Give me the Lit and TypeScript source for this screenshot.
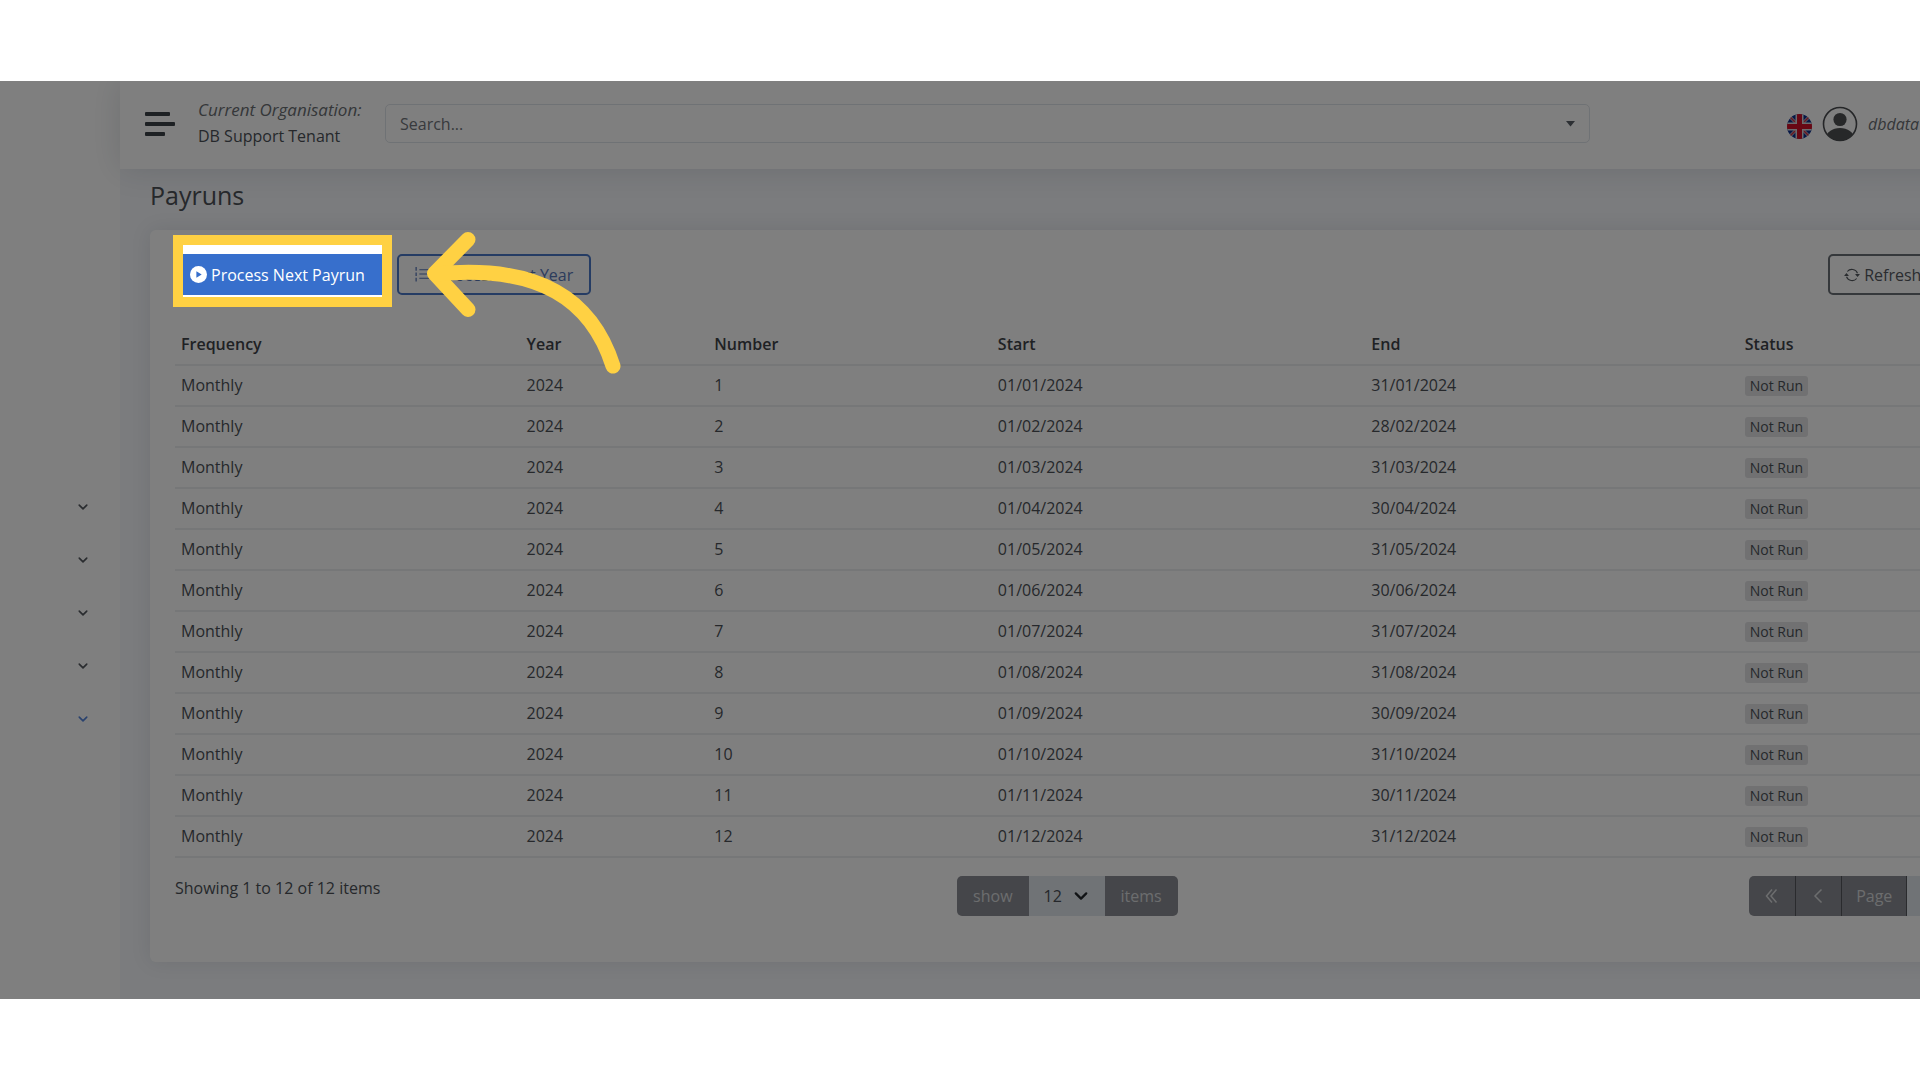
import { LitElement, html, css, svg } from "lit";
import { customElement } from "lit/decorators.js";

const PAYRUNS: Array<[string, string]> = [
  ["01/01/2024", "31/01/2024"],
  ["01/02/2024", "28/02/2024"],
  ["01/03/2024", "31/03/2024"],
  ["01/04/2024", "30/04/2024"],
  ["01/05/2024", "31/05/2024"],
  ["01/06/2024", "30/06/2024"],
  ["01/07/2024", "31/07/2024"],
  ["01/08/2024", "31/08/2024"],
  ["01/09/2024", "30/09/2024"],
  ["01/10/2024", "31/10/2024"],
  ["01/11/2024", "30/11/2024"],
  ["01/12/2024", "31/12/2024"],
];

const chevronDown = svg`<path d="M2 5l6 6 6-6" fill="none" stroke="currentColor" stroke-width="2.6" stroke-linecap="round" stroke-linejoin="round"/>`;

@customElement("app-root")
export class AppRoot extends LitElement {
  static styles = css`
    :host {
      display: block;
      padding: 81px 0;
      background: #fff;
      color: #4c5157;
      font: 16px/24px "Open Sans", "Noto Sans", sans-serif;
    }
    * {
      box-sizing: border-box;
    }
    button,
    input,
    select {
      font: inherit;
      color: inherit;
      margin: 0;
    }
    button {
      cursor: pointer;
    }
    svg {
      display: block;
      flex: none;
    }
    .frame {
      position: relative;
      overflow: hidden;
    }
    /* The application is wider than the window and is cut at its right edge. */
    .shell {
      display: grid;
      grid-template-columns: 120px 1fr;
      width: 116%;
      background: #f6f8fc;
    }
    .sidebar {
      display: flex;
      flex-direction: column;
      align-items: flex-end;
      gap: 37px;
      padding: 418px 29px 0 0;
      background: #fff;
    }
    .nav-toggle {
      display: block;
      padding: 3px;
      border: 0;
      background: none;
      color: #54595f;
    }
    .nav-toggle.active {
      color: #5585dc;
    }
    .main {
      min-width: 0;
    }
    .topbar {
      display: flex;
      align-items: center;
      height: 88px;
      padding: 0 25px 3px;
      background: #fff;
      box-shadow: 0 0 32px rgba(30, 40, 60, 0.14);
    }
    .menu {
      padding: 0;
      border: 0;
      background: none;
    }
    .org {
      width: 187px;
      margin: 0 0 2px 23px;
      line-height: 26px;
    }
    .org em {
      display: block;
      font-size: 17px;
      color: #6a6e73;
    }
    .search {
      display: flex;
      align-items: center;
      width: 1205px;
      height: 39px;
      padding: 0 14px;
      border: 1px solid #dfe4ea;
      border-radius: 5px;
    }
    .search input {
      flex: 1;
      min-width: 0;
      padding: 0;
      border: 0;
      outline: 0;
      background: none;
    }
    .search input::placeholder {
      color: #70757b;
      opacity: 1;
    }
    .user {
      display: flex;
      align-items: center;
      gap: 10px;
      margin-left: 197px;
      color: #6a6e73;
    }
    .flag {
      margin-top: 5px;
    }
    .content {
      padding: 11px 30px 37px;
    }
    h1 {
      margin: 0 0 20px;
      font-size: 25px;
      line-height: 30px;
      font-weight: 400;
    }
    .card {
      padding: 24px 25px 46px;
      border-radius: 6px;
      background: #fff;
      box-shadow: 0 0 20px rgba(30, 40, 60, 0.1);
    }
    .toolbar {
      display: grid;
      grid-template-columns: 1653fr 344fr;
      margin-bottom: 29px;
    }
    .actions {
      display: flex;
      gap: 6px;
    }
    .btn {
      display: flex;
      align-items: center;
      justify-self: start;
      gap: 4px;
      height: 41px;
      padding: 0 14px;
      border: 2px solid #6a7077;
      border-radius: 5px;
      background: none;
      color: #54595f;
      white-space: nowrap;
    }
    .btn.primary {
      padding: 0 24px 0 13px;
      border-color: #376fcc;
      background: #376fcc;
      color: #fff;
    }
    .btn.outline {
      gap: 8px;
      padding: 0 16px 0 15px;
      border-color: #4a78c8;
      color: #5878b8;
    }
    table {
      width: 100%;
      table-layout: fixed;
      border-collapse: collapse;
    }
    th,
    td {
      height: 41px;
      padding: 0 6px;
      border-bottom: 2px solid #eceef1;
      text-align: left;
      vertical-align: middle;
    }
    td {
      padding-bottom: 2px;
    }
    th {
      font-weight: 600;
      color: #3f4349;
    }
    .c-frequency {
      width: 17.3%;
    }
    .c-year {
      width: 9.4%;
    }
    .c-number {
      width: 14.2%;
    }
    .c-date {
      width: 18.7%;
    }
    .badge {
      display: inline-block;
      padding: 0 5px;
      border-radius: 3px;
      background: #e2e3e5;
      font-size: 14px;
      line-height: 20px;
      vertical-align: middle;
    }
    .footer {
      display: grid;
      grid-template-columns: 782fr 792fr 423fr;
      align-items: start;
      padding-top: 18px;
    }
    .group {
      display: flex;
      justify-self: start;
      height: 40px;
      border-radius: 5px;
      overflow: hidden;
      background: #8b8d94;
      color: #d8dadd;
    }
    .group > * {
      display: flex;
      align-items: center;
      padding: 0 15px;
    }
    .page-size > * {
      padding: 0 16px;
    }
    .page-size .size {
      position: relative;
      padding: 0;
      background: #e0e6ed;
      color: #4a4f56;
    }
    .size select {
      width: 76px;
      height: 40px;
      padding: 0 15px;
      border: 0;
      appearance: none;
      background: none;
    }
    .size svg {
      position: absolute;
      right: 17px;
      color: #22262a;
      pointer-events: none;
    }
    .group button {
      border: 0;
      border-right: 1px solid #54565c;
      background: none;
    }
    .pager .label {
      padding: 0 14px;
      border-right: 1px solid #54565c;
    }
    .pager input {
      width: 60px;
      border: 0;
      background: #e0e6ed;
    }
    /* Walk-through spotlight: dims all but the highlighted control. */
    .spotlight {
      position: absolute;
      left: 183px;
      top: 164px;
      width: 199px;
      height: 52px;
      box-shadow: 0 0 0 10px #ffd143, 0 0 0 3000px rgba(0, 0, 0, 0.5);
      pointer-events: none;
    }
    .arrow {
      position: absolute;
      left: 420px;
      top: 144px;
      pointer-events: none;
    }
  `;

  render() {
    return html`
      <div class="frame">
        <div class="shell">
          <nav class="sidebar" aria-label="Main">
            ${[0, 1, 2, 3, 4].map(
              (i) => html`<button class="nav-toggle ${i === 4 ? "active" : ""}" aria-label="Expand section">
                <svg width="10" height="10" viewBox="0 0 16 16">${chevronDown}</svg>
              </button>`
            )}
          </nav>
          <div class="main">
            <header class="topbar">
              <button class="menu" aria-label="Menu">
                <svg width="30" height="24" viewBox="0 0 30 24" fill="#3d4248">
                  <rect y="0" width="25" height="4" rx="1" />
                  <rect y="10" width="30" height="4" rx="1" />
                  <rect y="20" width="20" height="4" rx="1" />
                </svg>
              </button>
              <div class="org"><em>Current Organisation:</em>DB Support Tenant</div>
              <label class="search">
                <input type="text" placeholder="Search..." aria-label="Search" />
                <svg width="9" height="6" viewBox="0 0 9 6"><path d="M0 0h9L4.500 5.500z" fill="#5a6068" /></svg>
              </label>
              <div class="user">
                <svg class="flag" width="25" height="25" viewBox="0 0 25 25">
                  <clipPath id="disc"><circle cx="12.500" cy="12.500" r="12.500" /></clipPath>
                  <g clip-path="url(#disc)">
                    <rect width="25" height="25" fill="#0a2f8c" />
                    <path d="M0 0l25 25M25 0L0 25" stroke="#c0c0c8" stroke-width="3" />
                    <path d="M0 0l25 25M25 0L0 25" stroke="#c83048" stroke-width="1.500" />
                    <path d="M12.500 0v25M0 12.500h25" stroke="#d8d8dc" stroke-width="8" />
                    <path d="M12.500 0v25M0 12.500h25" stroke="#d01028" stroke-width="5" />
                  </g>
                </svg>
                <svg width="36" height="36" viewBox="0 0 36 36">
                  <clipPath id="face"><circle cx="18" cy="18" r="16.500" /></clipPath>
                  <circle cx="18" cy="18" r="16.500" fill="none" stroke="#4a4d50" stroke-width="1.600" />
                  <circle cx="18" cy="13.500" r="6.600" fill="#4e5052" />
                  <ellipse cx="18" cy="32" rx="14" ry="10" fill="#4e5052" clip-path="url(#face)" />
                </svg>
                <em>dbdata</em>
              </div>
            </header>
            <main class="content">
              <h1>Payruns</h1>
              <section class="card">
                <div class="toolbar">
                  <div class="actions">
                    <button class="btn primary">
                      <svg width="17" height="17" viewBox="0 0 16 16">
                        <circle cx="8" cy="8" r="8" fill="#fff" />
                        <path d="M6 5v6l5-3z" fill="#376fcc" />
                      </svg>
                      Process Next Payrun
                    </button>
                    <button class="btn outline">
                      <svg width="17" height="17" viewBox="0 0 16 16" fill="none" stroke="currentColor">
                        <path d="M5 3.500h10M5 7.500h10M5 11.500h10" stroke-width="1.100" />
                        <path d="M2 1v3.500M2 6v3.500M2 11v3.500" stroke-width="1.200" />
                      </svg>
                      Process Next Year
                    </button>
                  </div>
                  <button class="btn">
                    <svg width="16" height="16" viewBox="0 0 16 16" fill="currentColor">
                      <path d="M11.534 7h3.932a.25.25 0 0 1 .192.410l-1.966 2.360a.25.25 0 0 1-.384 0l-1.966-2.360a.25.25 0 0 1 .192-.410zm-11 2h3.932a.25.25 0 0 0 .192-.410L2.692 6.230a.25.25 0 0 0-.384 0L.342 8.590A.25.25 0 0 0 .534 9z" />
                      <path d="M3.300 4.500A6 6 0 0 1 13.500 6.200M12.700 11.500A6 6 0 0 1 2.500 9.800" fill="none" stroke="currentColor" stroke-width="1.100" />
                    </svg>
                    Refresh
                  </button>
                </div>
                <table>
                  <colgroup>
                    <col class="c-frequency" />
                    <col class="c-year" />
                    <col class="c-number" />
                    <col class="c-date" />
                    <col class="c-date" />
                    <col />
                  </colgroup>
                  <thead>
                    <tr>
                      <th>Frequency</th>
                      <th>Year</th>
                      <th>Number</th>
                      <th>Start</th>
                      <th>End</th>
                      <th>Status</th>
                    </tr>
                  </thead>
                  <tbody>
                    ${PAYRUNS.map(
                      ([start, end], i) => html`<tr>
                        <td>Monthly</td>
                        <td>2024</td>
                        <td>${i + 1}</td>
                        <td>${start}</td>
                        <td>${end}</td>
                        <td><span class="badge">Not Run</span></td>
                      </tr>`
                    )}
                  </tbody>
                </table>
                <div class="footer">
                  <div>Showing 1 to 12 of 12 items</div>
                  <div class="group page-size">
                    <label for="size">show</label>
                    <div class="size">
                      <select id="size">
                        <option>12</option>
                      </select>
                      <svg width="14" height="14" viewBox="0 0 16 16">${chevronDown}</svg>
                    </div>
                    <span>items</span>
                  </div>
                  <div class="group pager">
                    <button aria-label="First page">
                      <svg width="16" height="16" viewBox="0 0 16 16" fill="none" stroke="currentColor" stroke-width="1.500">
                        <path d="M8 1.500L2.500 8l5.500 6.500M12.500 1.500L7 8l5.500 6.500" />
                      </svg>
                    </button>
                    <button aria-label="Previous page">
                      <svg width="15" height="16" viewBox="0 0 15 16" fill="none" stroke="currentColor" stroke-width="1.500">
                        <path d="M10.500 1.500L4 8l6.500 6.500" />
                      </svg>
                    </button>
                    <label class="label" for="page">Page</label>
                    <input id="page" type="text" />
                  </div>
                </div>
              </section>
            </main>
          </div>
        </div>
        <div class="spotlight"></div>
        <svg class="arrow" width="210" height="170" viewBox="420 225 210 170" fill="none" stroke="#ffd143" stroke-width="15" stroke-linecap="round" stroke-linejoin="round">
          <path d="M468 239.500L434.500 273.500L468 309.500" />
          <path d="M436 274C540 264 592 300 613 366" />
        </svg>
      </div>
    `;
  }
}
